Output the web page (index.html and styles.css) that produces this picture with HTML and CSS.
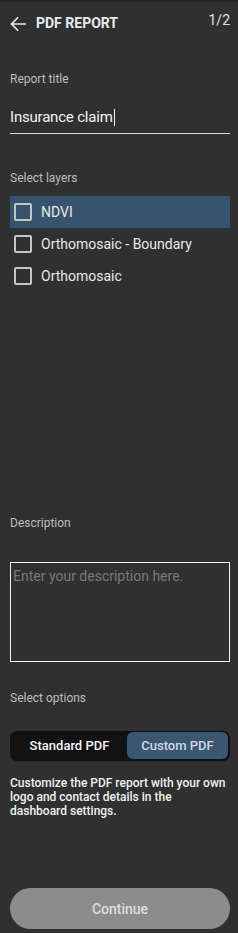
FILE: index.html
```html
<!DOCTYPE html>
<html lang="en">
<head>
<meta charset="utf-8">
<title>PDF Report</title>
<link rel="stylesheet" href="styles.css">
</head>
<body>
<div class="topbar"></div>
<div class="page">
  <header class="header">
    <div class="header-left">
      <svg class="back" width="16" height="14" viewBox="0 0 16 14" aria-hidden="true">
        <path d="M15.5 7H1.5M7.5 1L1.5 7L7.5 13" fill="none" stroke="#e8e8e8" stroke-width="1.7" stroke-linecap="square" stroke-linejoin="miter"/>
      </svg>
      <span class="title">PDF REPORT</span>
    </div>
    <span class="step">1/2</span>
  </header>

  <div class="label label-title">Report title</div>
  <div class="input"><span class="input-text">Insurance claim</span><span class="caret"></span></div>

  <div class="label label-layers">Select layers</div>
  <ul class="layers">
    <li class="layer layer-active"><span class="check"></span><span>NDVI</span></li>
    <li class="layer"><span class="check"></span><span>Orthomosaic - Boundary</span></li>
    <li class="layer"><span class="check"></span><span>Orthomosaic</span></li>
  </ul>

  <div class="label label-desc">Description</div>
  <div class="textarea"><span class="placeholder">Enter your description here.</span></div>

  <div class="label label-options">Select options</div>
  <div class="toggle">
    <div class="seg seg-std">Standard PDF</div>
    <div class="seg seg-custom">Custom PDF</div>
  </div>
  <p class="note">Customize the PDF report with your own logo and contact details in the dashboard settings.</p>

  <button class="continue">Continue</button>
</div>
</body>
</html>
```

FILE: styles.css
```css
* { box-sizing: border-box; }
html, body {
  margin: 0;
  padding: 0;
  background: #303030;
  font-family: Roboto, "Liberation Sans", sans-serif;
  color: #eaeaea;
}
.topbar {
  height: 2px;
  background: #242424;
}
.page {
  padding: 0 8px 0 10px;
  display: flex;
  flex-direction: column;
}
.header {
  margin-top: 10px;
  height: 22px;
  display: flex;
  justify-content: space-between;
  align-items: flex-start;
}
.header-left {
  display: flex;
  align-items: center;
  height: 22px;
  gap: 10px;
}
.back { display: block; margin-top: 1px; }
.title {
  font-size: 14px;
  line-height: 16px;
  font-weight: 700;
  color: #e6e9ee;
}
.step {
  font-size: 14px;
  line-height: 16px;
  color: #e0e0e0;
  margin-top: 0;
}
.label {
  font-size: 12px;
  line-height: 14px;
  color: #bdbdbd;
}
.label-title { margin-top: 38px; }
.input {
  margin-top: 22px;
  height: 26px;
  border-bottom: 1px solid #d6d6d6;
  display: flex;
  align-items: flex-start;
}
.input-text {
  font-size: 15px;
  line-height: 18px;
  color: #f2f2f2;
  letter-spacing: -0.2px;
}
.caret {
  width: 1px;
  height: 17px;
  margin-top: 1px;
  margin-left: 1px;
  background: #f2f2f2;
}
.label-layers { margin-top: 37px; }
.layers {
  list-style: none;
  margin: 11px 0 0;
  padding: 0;
  height: 320px;
}
.layer {
  height: 32px;
  display: flex;
  align-items: center;
  gap: 9px;
  padding-left: 4px;
  font-size: 14px;
  color: #e8e8e8;
}
.layer-active { background: #37536d; }
.check {
  width: 18px;
  height: 18px;
  border: 2px solid #c4c4c4;
  border-radius: 2px;
  flex: none;
}
.label-desc { margin-top: 0; }
.textarea {
  margin-top: 32px;
  height: 100px;
  border: 1px solid #f2f2f2;
  padding: 5px 2px;
}
.placeholder {
  font-size: 14px;
  line-height: 16px;
  color: #7a7a7a;
  display: block;
}
.label-options { margin-top: 29px; }
.toggle {
  margin-top: 26px;
  height: 30px;
  background: #121212;
  border-radius: 7px;
  padding: 1px 2px 2px 2px;
  display: flex;
}
.seg {
  display: flex;
  align-items: center;
  justify-content: center;
  font-size: 13px;
  font-weight: 500;
}
.seg-std {
  flex: 1;
  color: #f4f4f4;
}
.seg-custom {
  width: 101px;
  background: #3a5671;
  border-radius: 6px;
  color: #cdd8e4;
}
.note {
  margin: 15px 0 0;
  font-size: 12px;
  line-height: 14px;
  font-weight: 500;
  color: #f0f0f0;
}
.continue {
  margin-top: 70px;
  height: 41px;
  border: none;
  border-radius: 21px;
  background: #8c8c8c;
  color: #dadde2;
  font-family: Roboto, "Liberation Sans", sans-serif;
  font-size: 14px;
  font-weight: 500;
}
```
